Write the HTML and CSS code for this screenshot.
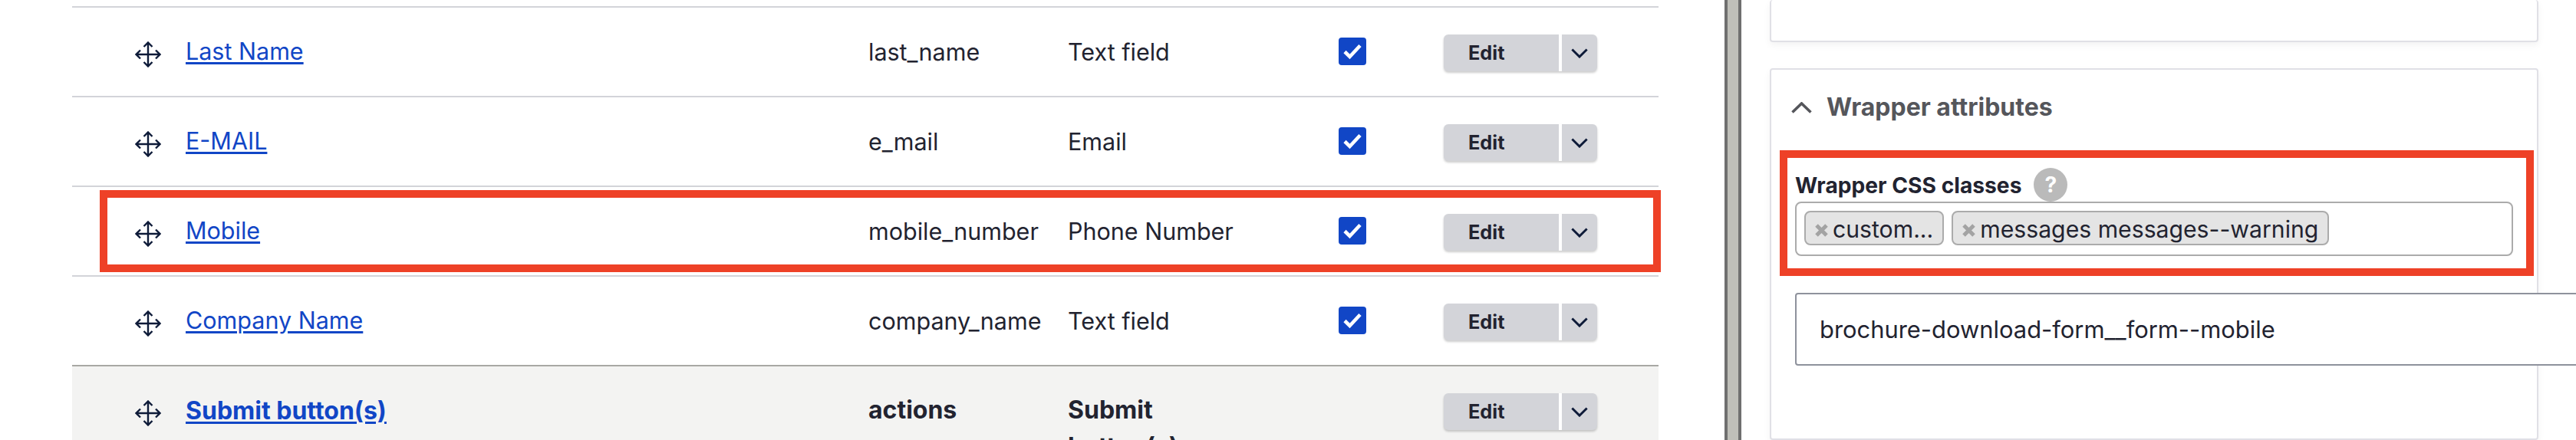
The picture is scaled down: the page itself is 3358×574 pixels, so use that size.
FILE: index.html
```html
<!DOCTYPE html>
<html lang="en">
<head>
    <meta charset="UTF-8">
    <title>Webform elements</title>
    <link rel="stylesheet" href="styles.css">
</head>
<body>
    <svg class="sprite" aria-hidden="true">
        <symbol id="icon-move" viewBox="0 0 34 34">
            <path d="M17 2V32M2 17H32M11.5 7 17 1.5 22.5 7M11.5 27 17 32.5 22.5 27M7 11.5 1.5 17 7 22.5M27 11.5 32.5 17 27 22.5" fill="none" stroke="currentColor" stroke-width="2.4"/>
        </symbol>
        <symbol id="icon-check" viewBox="0 0 36 36">
            <path d="M8 18.5 14.5 25 28 10.5" fill="none" stroke="#fff" stroke-width="4.6"/>
        </symbol>
        <symbol id="icon-chevron" viewBox="0 0 24 14">
            <path d="M1.5 1.5 12 12 22.5 1.5" fill="none" stroke="currentColor" stroke-width="3.2"/>
        </symbol>
        <symbol id="icon-remove" viewBox="0 0 17 17">
            <path d="M2 2 15 15M15 2 2 15" fill="none" stroke="currentColor" stroke-width="5"/>
        </symbol>
    </svg>

    <div class="page">
        <main class="elements">
            <div class="row">
                <div class="cell-title">
                    <svg class="handle"><use href="#icon-move"/></svg>
                    <a href="#">Last Name</a>
                </div>
                <div class="cell-text">last_name</div>
                <div class="cell-text cell-type">Text field</div>
                <div class="cell-check"><svg class="checkbox"><use href="#icon-check"/></svg></div>
                <div class="operations">
                    <span class="op-edit">Edit</span>
                    <span class="op-toggle"><svg class="chevron"><use href="#icon-chevron"/></svg></span>
                </div>
            </div>
            <div class="row">
                <div class="cell-title">
                    <svg class="handle"><use href="#icon-move"/></svg>
                    <a href="#">E-MAIL</a>
                </div>
                <div class="cell-text">e_mail</div>
                <div class="cell-text cell-type">Email</div>
                <div class="cell-check"><svg class="checkbox"><use href="#icon-check"/></svg></div>
                <div class="operations">
                    <span class="op-edit">Edit</span>
                    <span class="op-toggle"><svg class="chevron"><use href="#icon-chevron"/></svg></span>
                </div>
            </div>
            <div class="row">
                <div class="cell-title">
                    <svg class="handle"><use href="#icon-move"/></svg>
                    <a href="#">Mobile</a>
                </div>
                <div class="cell-text">mobile_number</div>
                <div class="cell-text cell-type">Phone Number</div>
                <div class="cell-check"><svg class="checkbox"><use href="#icon-check"/></svg></div>
                <div class="operations">
                    <span class="op-edit">Edit</span>
                    <span class="op-toggle"><svg class="chevron"><use href="#icon-chevron"/></svg></span>
                </div>
                <div class="callout callout-row"></div>
            </div>
            <div class="row">
                <div class="cell-title">
                    <svg class="handle"><use href="#icon-move"/></svg>
                    <a href="#">Company Name</a>
                </div>
                <div class="cell-text">company_name</div>
                <div class="cell-text cell-type">Text field</div>
                <div class="cell-check"><svg class="checkbox"><use href="#icon-check"/></svg></div>
                <div class="operations">
                    <span class="op-edit">Edit</span>
                    <span class="op-toggle"><svg class="chevron"><use href="#icon-chevron"/></svg></span>
                </div>
            </div>
            <div class="row row-actions">
                <div class="cell-title">
                    <svg class="handle"><use href="#icon-move"/></svg>
                    <a href="#">Submit button(s)</a>
                </div>
                <div class="cell-text">actions</div>
                <div class="cell-text cell-type">Submit button(s)</div>
                <div class="cell-check"></div>
                <div class="operations">
                    <span class="op-edit">Edit</span>
                    <span class="op-toggle"><svg class="chevron"><use href="#icon-chevron"/></svg></span>
                </div>
            </div>
        </main>

        <div class="splitter"></div>

        <aside class="sidebar">
            <div class="card card-previous"></div>
            <div class="card">
                <div class="card-title">
                    <svg class="chevron-up" viewBox="0 0 27 15"><path d="M1.5 13.5 13.5 2 25.5 13.5" fill="none" stroke="currentColor" stroke-width="3.6"/></svg>
                    <span>Wrapper attributes</span>
                </div>
                <div class="form-item">
                    <div class="form-label">
                        <label>Wrapper CSS classes</label>
                        <span class="help">?</span>
                    </div>
                    <div class="tags">
                        <span class="tag"><svg class="tag-x"><use href="#icon-remove"/></svg>custom...</span>
                        <span class="tag"><svg class="tag-x"><use href="#icon-remove"/></svg>messages messages--warning</span>
                    </div>
                    <div class="callout callout-field"></div>
                </div>
                <div class="text-input">brochure-download-form__form--mobile</div>
            </div>
        </aside>
    </div>
</body>
</html>
```

FILE: styles.css
```css
* {
    box-sizing: border-box;
}

body {
    margin: 0;
    background-color: #fff;
    color: #222330;
    font-family: Inter, "Liberation Sans", sans-serif;
    font-size: 30.5px;
    line-height: 46px;
}

.sprite {
    display: none;
}

.page {
    display: flex;
    height: 574px;
    overflow: hidden;
    padding-left: 94px;
}

/* Elements table */
.elements {
    flex: none;
    width: 2068px;
    padding-top: 8px;
}

.row {
    position: relative;
    display: grid;
    grid-template-columns: 1038px 260px 353px 137px 280px;
    height: 117px;
    border-top: 2px solid #d3d4d9;
}

.row-actions {
    height: 200px;
    border-top-color: #a8a8a4;
    background-color: #f3f3f2;
    font-size: 32px;
    font-weight: 700;
    line-height: 48px;
}

.cell-title {
    display: flex;
    align-items: flex-start;
    padding: 34px 0 0 82px;
}

.cell-title a {
    color: #1146c6;
    text-decoration-thickness: 3px;
    text-underline-offset: 3px;
}

.handle {
    flex: none;
    width: 34px;
    height: 34px;
    margin: 10px 32px 0 0;
    color: #0d1a38;
}

.cell-text {
    padding-top: 35px;
}

.row-actions .cell-text {
    padding-top: 33px;
}

.cell-type {
    padding-right: 125px;
}

.cell-check {
    padding-top: 39px;
}

.checkbox {
    display: block;
    width: 36px;
    height: 36px;
    border-radius: 4px;
    background-color: #1146c6;
}

.operations {
    display: flex;
    width: 200px;
    height: 48px;
    margin-top: 35px;
    border-radius: 6px;
    background-color: #d3d4d9;
    box-shadow: 0 2px 3px rgba(0, 0, 0, 0.2);
    font-size: 25.3px;
    font-weight: 700;
    line-height: 48px;
}

.op-edit {
    width: 154px;
    padding-left: 32px;
    border-right: 4px solid #fff;
}

.op-toggle {
    display: flex;
    flex: 1;
    align-items: center;
    justify-content: center;
}

.chevron {
    width: 22px;
    height: 13px;
    color: #0d1a38;
}

/* Red annotation boxes */
.callout {
    position: absolute;
    border: 10px solid #ee4127;
    pointer-events: none;
}

.callout-row {
    top: 4px;
    right: -3px;
    bottom: 4px;
    left: 36px;
}

.callout-field {
    top: -23px;
    right: -27px;
    bottom: -26px;
    left: -20px;
}

.splitter {
    flex: none;
    width: 22px;
    margin-left: 86px;
    border-left: 4px solid #6f6f6f;
    border-right: 4px solid #6f6f6f;
    background-color: #bfbfb9;
}

/* Sidebar */
.sidebar {
    flex: none;
    display: flex;
    flex-direction: column;
    gap: 34px;
    width: 1002px;
    margin-left: 37px;
}

.card {
    height: 600px;
    border: 2px solid #e0e0e6;
    border-radius: 4px;
    background-color: #fff;
    box-shadow: 0 4px 10px rgba(0, 0, 0, 0.05);
}

.card-previous {
    flex: none;
    height: 55px;
    border-top: 0;
}

.card-title {
    display: flex;
    align-items: center;
    gap: 19px;
    height: 44px;
    margin-top: 27px;
    padding-left: 26px;
    color: #55565b;
    font-size: 32px;
    font-weight: 700;
}

.chevron-up {
    flex: none;
    width: 27px;
    height: 15px;
}

.form-item {
    position: relative;
    width: 936px;
    margin: 57px 0 0 31px;
}

.form-label {
    display: flex;
    align-items: center;
    gap: 16px;
    height: 44px;
    font-size: 28.2px;
    font-weight: 700;
}

.form-label label {
    padding-top: 2px;
}

.help {
    width: 44px;
    height: 44px;
    border-radius: 50%;
    background-color: #bababa;
    color: #fff;
    line-height: 44px;
    text-align: center;
}

.tags {
    display: flex;
    gap: 10px;
    height: 71px;
    padding: 10px;
    border: 2px solid #ababab;
    border-radius: 8px;
}

.tag {
    display: flex;
    height: 45px;
    padding: 0 12px;
    border: 2px solid #ababab;
    border-radius: 8px;
    background-color: #e4e4e4;
    font-size: 30.2px;
    line-height: 45px;
}

.tag-x {
    flex: none;
    width: 17px;
    height: 17px;
    margin: 15px 6px 0 0;
    color: #a3a3a3;
}

.text-input {
    width: 1100px;
    height: 95px;
    margin: 48px 0 0 31px;
    padding: 0 30px;
    border: 2px solid #8e929c;
    border-radius: 4px;
    background-color: #fff;
    font-size: 30.9px;
    line-height: 91px;
}
```
